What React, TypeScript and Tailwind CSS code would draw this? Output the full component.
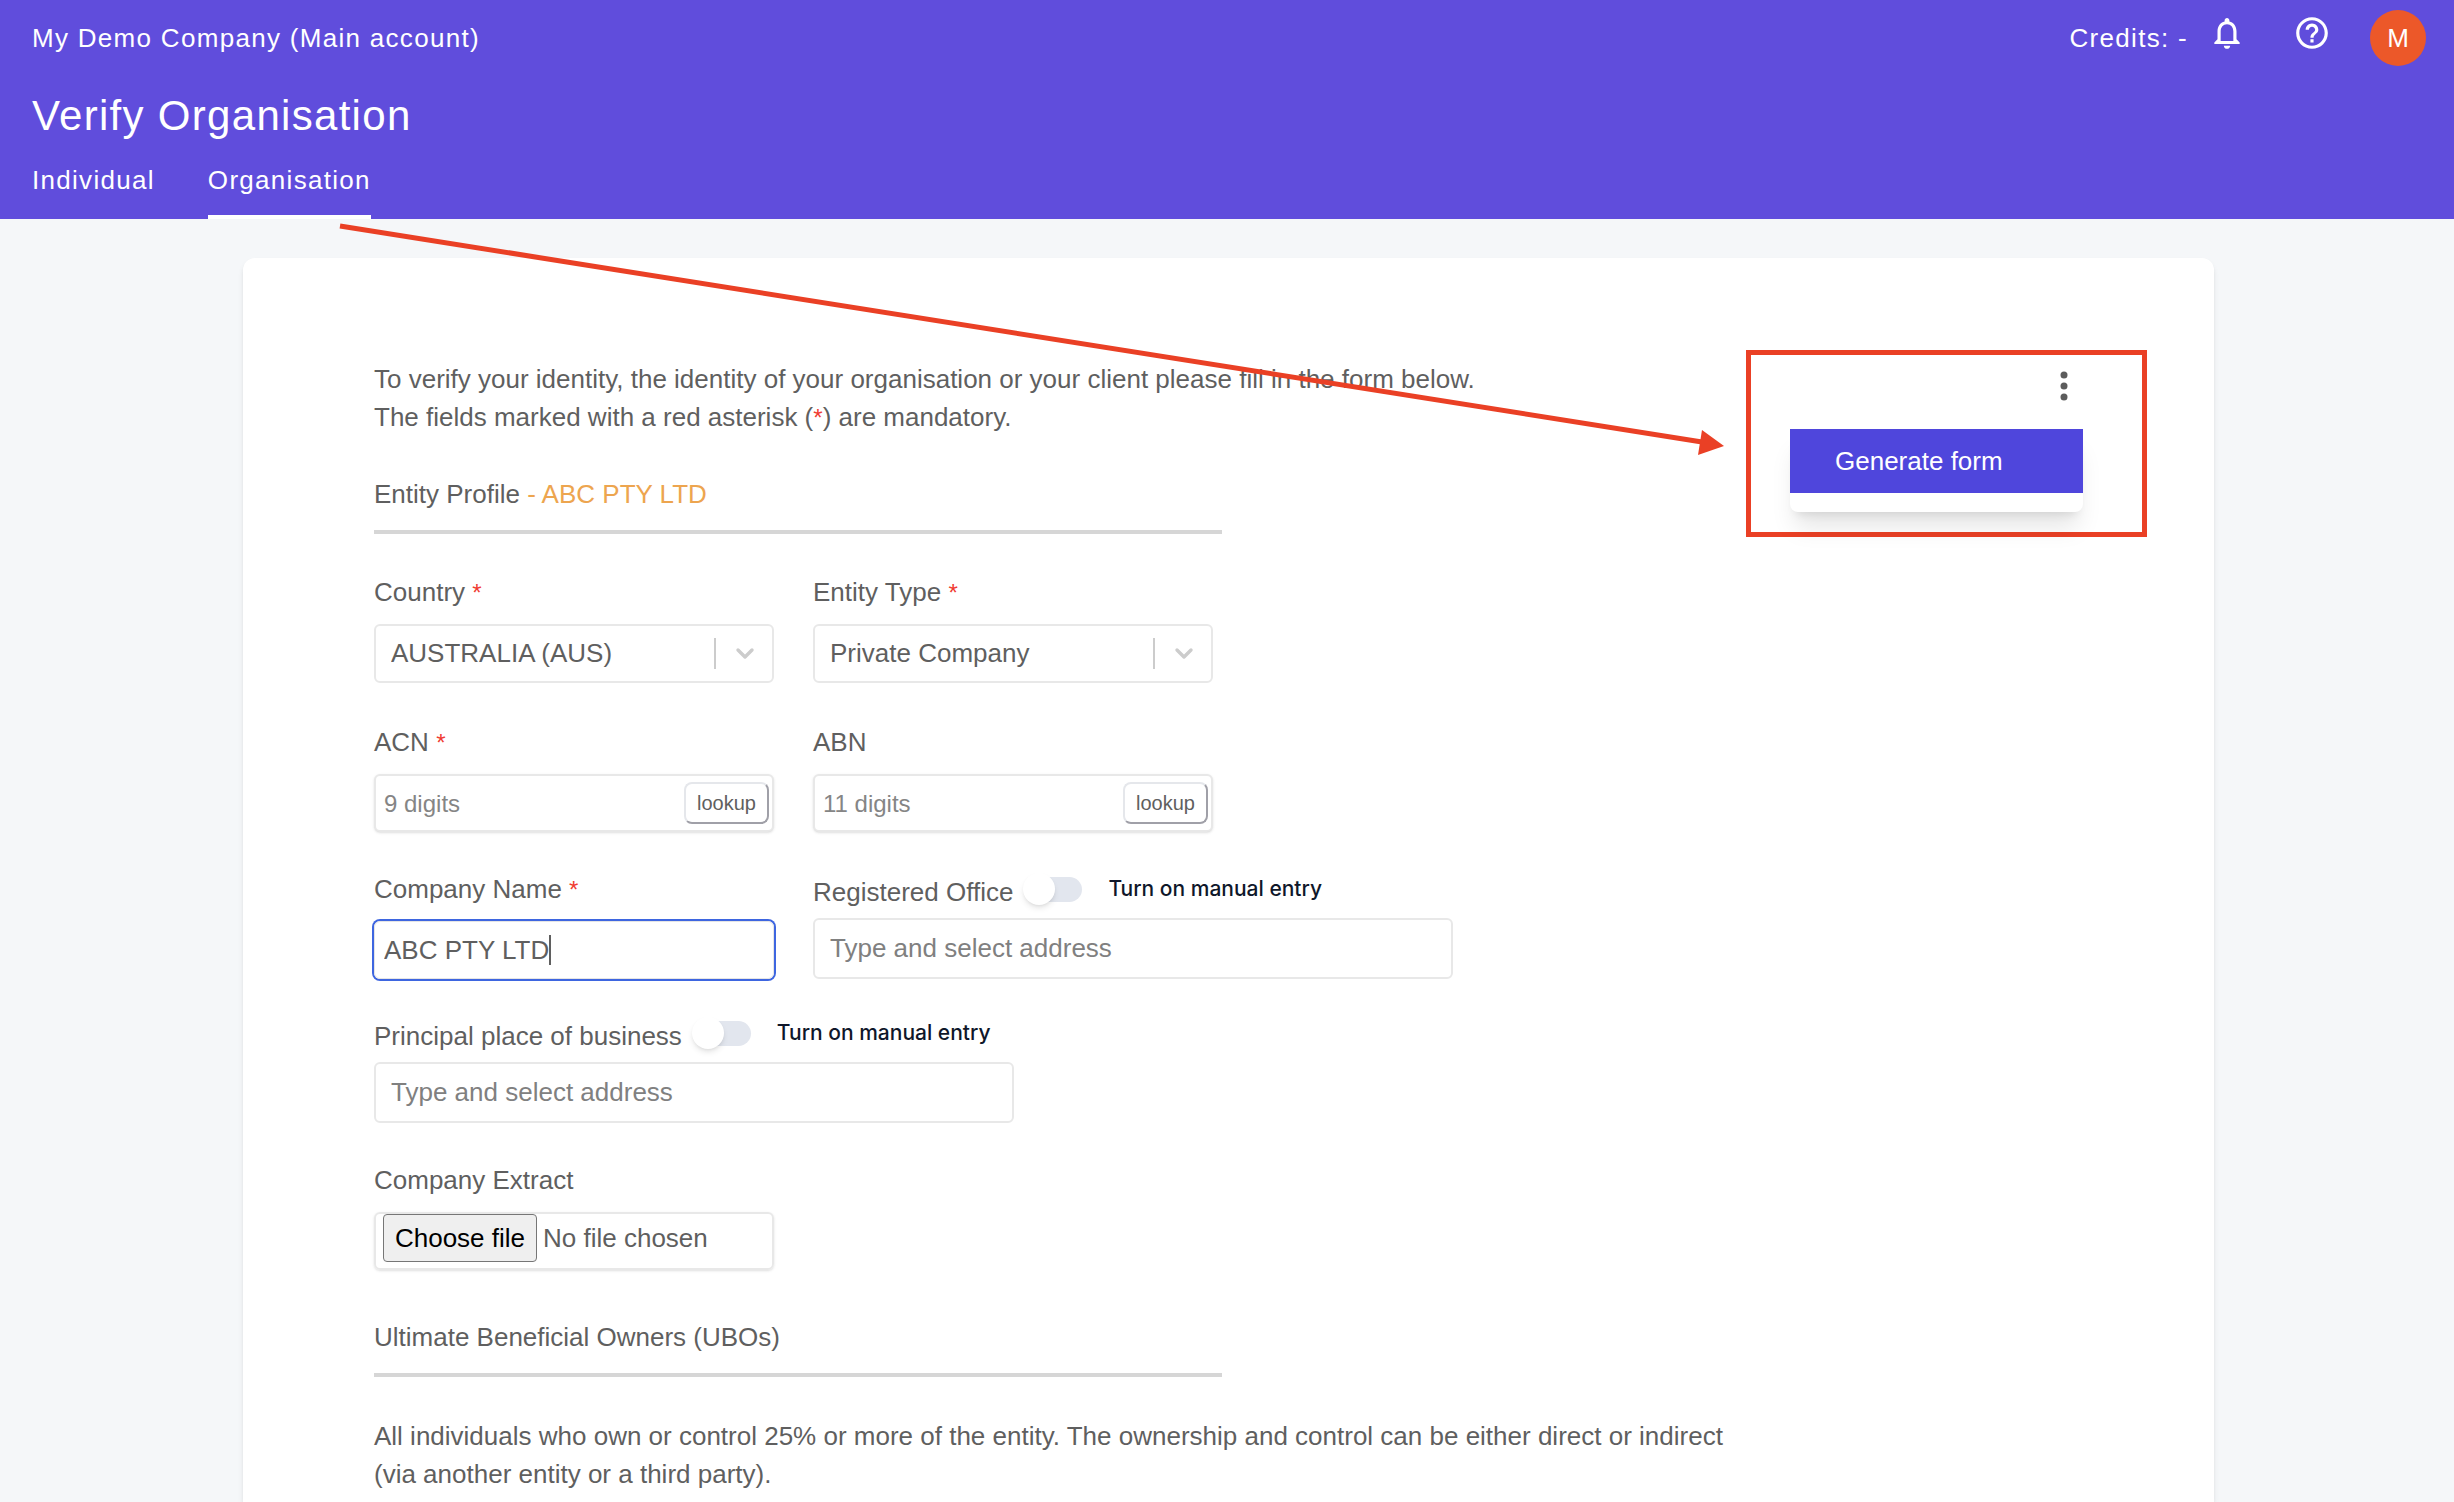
import { useState } from "react";
import { MdNotificationsNone, MdHelpOutline } from "react-icons/md";

function Required() {
  return <span className="text-2xl leading-none text-[#f03c32]">*</span>;
}

function SelectField({ id, label, options }: { id: string; label: string; options: string[] }) {
  return (
    <div className="w-[400px]">
      <label htmlFor={id} className="mb-[13px] block">
        {label} <Required />
      </label>
      <div className="relative">
        <select
          id={id}
          className="h-[59px] w-full appearance-none rounded-md border-2 border-[#e8e8e8] bg-white pr-20 pb-px pl-[15px] outline-none"
        >
          {options.map((option) => (
            <option key={option}>{option}</option>
          ))}
        </select>
        <span className="pointer-events-none absolute inset-y-[14px] right-0 flex w-[60px] items-center justify-center border-l-2 border-[#cccccc]">
          <svg width="20" height="14" viewBox="0 0 20 14" fill="none" stroke="#cccccc" strokeWidth="3.4" strokeLinecap="round" strokeLinejoin="round">
            <path d="M3 3l7 7 7-7" />
          </svg>
        </span>
      </div>
    </div>
  );
}

function LookupField({ id, label, placeholder, required }: { id: string; label: string; placeholder: string; required?: boolean }) {
  return (
    <div className="w-[400px]">
      <label htmlFor={id} className="mb-[13px] block">
        {label} {required && <Required />}
      </label>
      <div className="flex h-[58px] items-center rounded-md border-2 border-[#e8e8e8] bg-white pr-[3px] pl-2 shadow-sm">
        <input id={id} type="text" placeholder={placeholder} className="min-w-0 flex-1 pt-0.5 text-2xl outline-none placeholder:text-[#858585]" />
        <button
          type="button"
          className="h-[42px] w-[85px] rounded-lg border-2 border-t-[#e5e7eb] border-r-[#a0a0a8] border-b-[#a0a0a8] border-l-[#e5e7eb] text-xl leading-none"
        >
          lookup
        </button>
      </div>
    </div>
  );
}

function AddressField({ id, label }: { id: string; label: string }) {
  const [manual, setManual] = useState(false);
  return (
    <div className="w-[640px]">
      <div className="mb-1 flex h-11 items-center gap-2.5">
        <label htmlFor={id}>{label}</label>
        <label className="flex items-center gap-[26px] pb-1.5 text-[#0f172a]">
          <span className="relative flex h-8 w-[59px] items-center">
            <input
              type="checkbox"
              checked={manual}
              onChange={() => setManual(!manual)}
              className="peer ml-1 h-[25px] w-[55px] appearance-none rounded-full bg-[#e2e6ee] checked:bg-[#604ddc]"
            />
            <span className="pointer-events-none absolute left-0 size-8 rounded-full bg-white shadow-md peer-checked:left-7" />
          </span>
          <span className="font-[Inter,sans-serif] text-[21px] font-medium">Turn on manual entry</span>
        </label>
      </div>
      <input
        id={id}
        type="text"
        placeholder="Type and select address"
        className="h-[61px] w-full rounded-md border-2 border-[#e8e8e8] px-[15px] outline-none placeholder:text-[#808080]"
      />
    </div>
  );
}

function SectionTitle({ children }: { children: React.ReactNode }) {
  return <h2 className="w-[848px] border-b-4 border-[#d6d6d6] pb-[17px]">{children}</h2>;
}

function Header() {
  return (
    <header className="flex flex-col bg-[#604ddc] px-8 tracking-wider text-white">
      <div className="-mr-1 flex h-[76px] items-center justify-between">
        <span>My Demo Company (Main account)</span>
        <div className="flex items-center">
          <span>Credits: -</span>
          <button type="button" aria-label="Notifications" className="mb-2.5 ml-5">
            <MdNotificationsNone size={38} />
          </button>
          <button type="button" aria-label="Help" className="mb-2.5 ml-[47px]">
            <MdHelpOutline size={38} />
          </button>
          <button type="button" aria-label="Account" className="ml-[39px] size-14 rounded-full bg-[#ec5829] text-center tracking-normal">
            M
          </button>
        </div>
      </div>
      <h1 className="text-[42px] leading-[80px]">Verify Organisation</h1>
      <nav className="flex h-[63px] gap-[53px] pt-[5px]">
        <a href="#individual">Individual</a>
        <a href="#organisation" aria-current="page" className="border-b-4 border-white">
          Organisation
        </a>
      </nav>
    </header>
  );
}

function ActionsMenu() {
  return (
    <div className="relative mt-[92px] mr-[67px] h-[187px] w-[401px] shrink-0 border-[5px] border-[#ea4025]">
      <button type="button" aria-label="More actions" className="absolute top-[11px] right-[62px] flex h-10 w-8 items-center justify-center">
        <svg width="8" height="30" viewBox="0 0 8 30" fill="#5c5c5c">
          <circle cx="4" cy="4" r="3.5" />
          <circle cx="4" cy="15" r="3.5" />
          <circle cx="4" cy="26" r="3.5" />
        </svg>
      </button>
      <div className="absolute top-[74px] right-[59px] w-[293px] rounded-b-lg bg-white pb-[19px] shadow-xl">
        <button type="button" className="h-16 w-full bg-[#4f46dc] pl-[45px] text-left text-white">
          Generate form
        </button>
      </div>
    </div>
  );
}

export default function App() {
  const [company, setCompany] = useState("ABC PTY LTD");
  return (
    <div className="relative flex min-h-screen flex-col bg-[#f5f7f9] font-['Liberation_Sans',Arial,sans-serif] text-[26px] leading-[38px] text-[#5f5f5f]">
      <Header />
      <main className="mt-[39px] mr-60 ml-[243px] flex flex-1 items-start justify-between rounded-t-xl bg-white shadow-md">
        <form className="min-w-0 flex-1 pt-[102px] pb-2 pl-[131px]">
          <p className="mb-[39px]">
            To verify your identity, the identity of your organisation or your client please fill in the form below.
            <br />
            The fields marked with a red asterisk (<Required />) are mandatory.
          </p>
          <SectionTitle>
            Entity Profile <span className="text-[#eda54f]">- ABC PTY LTD</span>
          </SectionTitle>
          <div className="mt-[39px] flex gap-[39px]">
            <SelectField id="country" label="Country" options={["AUSTRALIA (AUS)"]} />
            <SelectField id="entity" label="Entity Type" options={["Private Company"]} />
          </div>
          <div className="mt-10 flex gap-[39px]">
            <LookupField id="acn" label="ACN" placeholder="9 digits" required />
            <LookupField id="abn" label="ABN" placeholder="11 digits" />
          </div>
          <div className="mt-[38px] flex gap-[39px]">
            <div className="w-[400px]">
              <label htmlFor="company" className="mb-[13px] block">
                Company Name <Required />
              </label>
              <div className="relative">
                <input
                  id="company"
                  type="text"
                  value={company}
                  onChange={(event) => setCompany(event.target.value)}
                  className="h-[58px] w-full rounded-md border border-[#e5e5e5] px-[9px] ring-2 ring-[#3e66e0] outline-none"
                />
                <span className="absolute top-3.5 left-[175px] h-[30px] w-0.5 bg-[#5f5f5f]" />
              </div>
            </div>
            <AddressField id="registered" label="Registered Office" />
          </div>
          <div className="mt-[35px]">
            <AddressField id="principal" label="Principal place of business" />
          </div>
          <div className="mt-[38px] w-[400px]">
            <p className="mb-[13px]">Company Extract</p>
            <div className="flex h-[58px] items-start rounded-md border-2 border-[#e8e8e8] pl-[7px] shadow-sm">
              <label className="flex h-12 w-[154px] items-center justify-center rounded border border-[#767676] bg-[#efefef] text-black">
                Choose file
                <input type="file" aria-label="Company Extract" className="sr-only" />
              </label>
              <span className="pt-[5px] pl-1.5">No file chosen</span>
            </div>
          </div>
          <div className="mt-12">
            <SectionTitle>Ultimate Beneficial Owners (UBOs)</SectionTitle>
          </div>
          <p className="mt-10">
            All individuals who own or control 25% or more of the entity. The ownership and control can be either direct or indirect
            <br />
            (via another entity or a third party).
          </p>
        </form>
        <ActionsMenu />
      </main>
      <svg className="pointer-events-none absolute top-[220px] left-[336px]" width="1392" height="240" viewBox="336 220 1392 240" aria-hidden="true">
        <path d="M340 226L1702 442" stroke="#ea4025" strokeWidth="5" />
        <path d="M1702 430L1724 446L1698 455Z" fill="#ea4025" />
      </svg>
    </div>
  );
}
